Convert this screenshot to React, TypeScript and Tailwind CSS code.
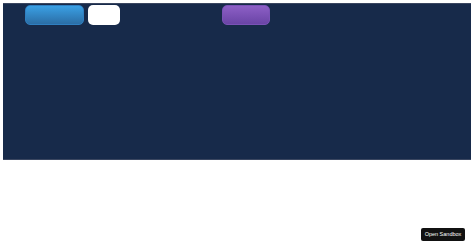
import React from "react";

export default function App() {
  return (
    <div className="relative w-[474px] h-[248px] bg-white" style={{ fontFamily: '"Liberation Sans", Arial, sans-serif' }}>
      <div className="absolute left-[3px] top-[3px] w-[468px] h-[157px] bg-[#172a4a] border-t border-b border-[#3a4660]">
        <div className="flex items-start pt-[1px] pl-[22px]">
          <div className="w-[59px] h-[20px] rounded-[5px] bg-gradient-to-b from-[#3aa0e4] to-[#2b6ea6] border border-[#2f7fc0]" />
          <div className="ml-[4px] w-[32px] h-[20px] rounded-[5px] bg-white" />
          <div className="ml-[102px] w-[48px] h-[20px] rounded-[5px] bg-gradient-to-b from-[#8d5fc6] to-[#6a44a6] border border-[#7a52b6]" />
        </div>
      </div>
      <div className="absolute left-[421px] top-[228px] w-[44px] h-[13px] flex items-center justify-center bg-[#111111] rounded-[2px] text-white text-[5.5px] leading-none whitespace-nowrap">
        Open Sandbox
      </div>
    </div>
  );
}
